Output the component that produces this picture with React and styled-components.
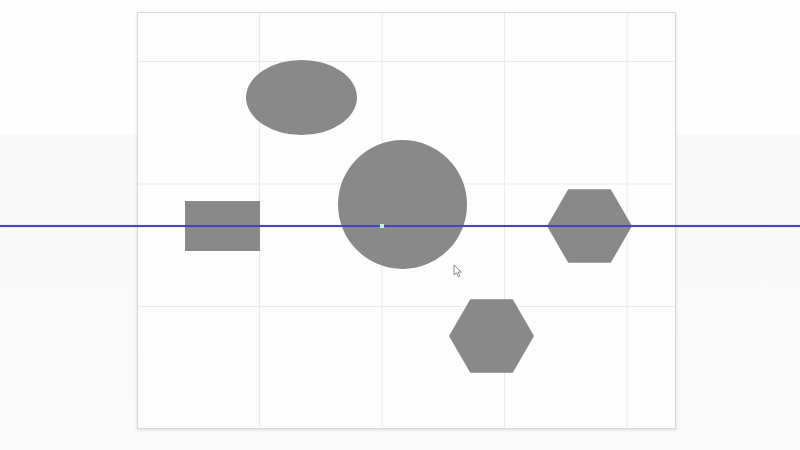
import React from 'react'
import styled, { createGlobalStyle } from 'styled-components'

const Global = createGlobalStyle`
  html, body { margin: 0; padding: 0; }
  body { font-family: 'Liberation Sans', Arial, sans-serif; }
`

const shapes = [
  { type: 'ellipse', cx: 301.5, cy: 97.5, rx: 55.5, ry: 37.5 },
  { type: 'circle', cx: 402.5, cy: 204.5, r: 64.5 },
  { type: 'rect', x: 185, y: 201, w: 75, h: 50 },
  { type: 'hex', cx: 589.5, cy: 226, r: 42.5 },
  { type: 'hex', cx: 491.5, cy: 336, r: 42.5 },
]

const hexPoints = (cx, cy, r) => {
  const pts = []
  for (let i = 0; i < 6; i++) {
    const a = (Math.PI / 3) * i
    pts.push(`${(cx + r * Math.cos(a)).toFixed(2)},${(cy + r * Math.sin(a)).toFixed(2)}`)
  }
  return pts.join(' ')
}

function Shape({ s }) {
  if (s.type === 'ellipse') return <ellipse cx={s.cx} cy={s.cy} rx={s.rx} ry={s.ry} />
  if (s.type === 'circle') return <circle cx={s.cx} cy={s.cy} r={s.r} />
  if (s.type === 'rect') return <rect x={s.x} y={s.y} width={s.w} height={s.h} />
  return <polygon points={hexPoints(s.cx, s.cy, s.r)} />
}

export default function App() {
  return (
    <Page>
      <Global />
      <Canvas>
        <Shapes viewBox="138 13 537 415">
          {shapes.map((s, i) => <Shape key={i} s={s} />)}
        </Shapes>
      </Canvas>
      <Guide />
      <Anchor />
      <Cursor width="10" height="14" viewBox="0 0 10 14">
        <path d="M1 1 L1 11 L3.4 8.7 L5.2 12.8 L6.8 12.1 L5 8.1 L8.3 8.1 Z" />
      </Cursor>
    </Page>
  )
}

const Page = styled.div`
  position: relative;
  display: flex;
  align-items: flex-start;
  width: 800px;
  height: 450px;
  overflow: hidden;
  box-sizing: border-box;
  padding: 12px 0 0 137px;
  background: linear-gradient(to bottom, #fefefe 0, #fefefe 133px, #f8f8f8 136px, #fafafa 450px);
`

const Canvas = styled.div`
  position: relative;
  flex: 0 0 539px;
  height: 417px;
  box-sizing: border-box;
  border: 1px solid #d9d9d9;
  background-color: #fdfdfd;
  background-image:
    linear-gradient(to right, #ebebeb 1px, transparent 1px),
    linear-gradient(to bottom, #ebebeb 1px, transparent 1px);
  background-size: 122.5px 122.5px;
  background-position: 121px 48px;
  box-shadow: 0 1px 3px rgba(0, 0, 0, 0.12);
`

const Shapes = styled.svg`
  position: absolute;
  inset: 0;
  width: 100%;
  height: 100%;
  fill: #898989;
`

const Guide = styled.div`
  position: absolute;
  left: 0;
  right: 0;
  top: 225px;
  height: 2px;
  background: #4944c4;
  box-shadow: 0 0 1px rgba(90, 90, 220, 0.6);
`

const Anchor = styled.div`
  position: absolute;
  left: 380px;
  top: 224px;
  width: 4px;
  height: 4px;
  background: #bff0fb;
  box-shadow: 0 0 1px #6fd3ee;
`

const Cursor = styled.svg`
  position: absolute;
  left: 453px;
  top: 264px;
  fill: #ffffff;
  stroke: #8a8a8a;
  stroke-width: 1;
`
